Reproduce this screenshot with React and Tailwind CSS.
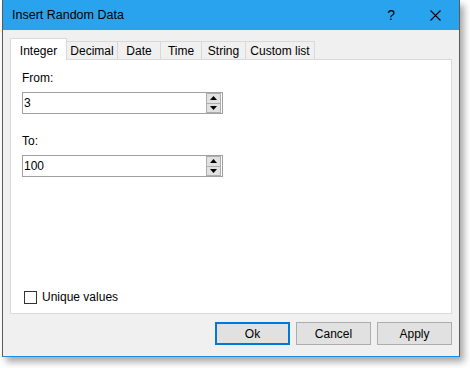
import React from 'react';

const TABS = [
  { label: 'Integer', w: 'w-[57px]' },
  { label: 'Decimal', w: 'w-[51px]' },
  { label: 'Date', w: 'w-[43px]' },
  { label: 'Time', w: 'w-[41px]' },
  { label: 'String', w: 'w-[44px]' },
  { label: 'Custom list', w: 'w-[69px]' },
];

const Spinner = () => (
  <div className="flex flex-col w-[15px] h-[20px] gap-0 mr-px">
    <div className="flex-1 flex items-center justify-center bg-[#e1e1e1] border border-[#adadad]">
      <svg width="7" height="4" viewBox="0 0 7 4"><polygon points="3.5,0 7,4 0,4" fill="#000" /></svg>
    </div>
    <div className="flex-1 flex items-center justify-center bg-[#e1e1e1] border border-[#adadad] border-t-0">
      <svg width="7" height="4" viewBox="0 0 7 4"><polygon points="0,0 7,0 3.5,4" fill="#000" /></svg>
    </div>
  </div>
);

const NumberField = ({ value }) => (
  <div className="flex items-center w-[201px] h-[22px] border border-[#a0a0a0] bg-white">
    <span className="flex-1 pl-[1px] leading-none">{value}</span>
    <Spinner />
  </div>
);

const Button = ({ children, primary }) => (
  <button
    className={
      'w-[75px] h-[23px] bg-[#e1e1e1] text-[12px] leading-none ' +
      (primary ? 'border-2 border-[#0078d7]' : 'border border-[#adadad]')
    }
  >
    {children}
  </button>
);

export default function App() {
  return (
    <div
      className="w-[470px] h-[368px] bg-white text-black text-[12px] pl-[2px]"
      style={{ fontFamily: '"Liberation Sans", Arial, sans-serif' }}
    >
      <div className="w-[458px] h-[357px] flex flex-col bg-[#f0f0f0] border-l border-r border-[#5a5a5a] border-b border-b-[#1c8ee8] shadow-[4px_5px_7px_rgba(0,0,0,0.35)]">
        {/* title bar */}
        <div className="h-[30px] shrink-0 bg-[#2aa3ef] flex items-center pl-[9px]">
          <span className="text-[12.5px]">Insert Random Data</span>
          <span className="ml-auto text-[14px] mr-[35px]">?</span>
          <svg width="11" height="11" viewBox="0 0 11 11" className="mr-[18px]">
            <path d="M0.5 0.5 L10.5 10.5 M10.5 0.5 L0.5 10.5" stroke="#000" strokeWidth="1.1" />
          </svg>
        </div>

        <div className="flex-1 flex flex-col px-[7px] pt-[8px]">
          {/* tabs */}
          <div className="flex items-end h-[21px]">
            {TABS.map((t, i) =>
              i === 0 ? (
                <div
                  key={t.label}
                  className={`${t.w} h-[22px] -mb-px relative z-10 bg-white border-t border-l border-r border-[#d9d9d9] flex justify-center pt-[3px]`}
                >
                  {t.label}
                </div>
              ) : (
                <div
                  key={t.label}
                  className={`${t.w} h-[18px] bg-[#f0f0f0] border-t border-r border-[#d9d9d9] flex items-center justify-center`}
                >
                  {t.label}
                </div>
              )
            )}
          </div>

          {/* panel */}
          <div className="h-[255px] bg-white border border-[#d9d9d9] flex flex-col pl-[11px] pt-[11px] pb-[7px]">
            <div className="leading-[15px]">From:</div>
            <div className="mt-[6px]">
              <NumberField value="3" />
            </div>
            <div className="leading-[15px] mt-[20px]">To:</div>
            <div className="mt-[6px]">
              <NumberField value="100" />
            </div>
            <div className="mt-auto flex items-center gap-[5px] pl-[2px]">
              <div className="w-[13px] h-[13px] border border-[#333] bg-white" />
              <span>Unique values</span>
            </div>
          </div>

          {/* buttons */}
          <div className="flex justify-end gap-[6px] mt-[8px] pr-0">
            <Button primary>Ok</Button>
            <Button>Cancel</Button>
            <Button>Apply</Button>
          </div>
        </div>
      </div>
    </div>
  );
}
